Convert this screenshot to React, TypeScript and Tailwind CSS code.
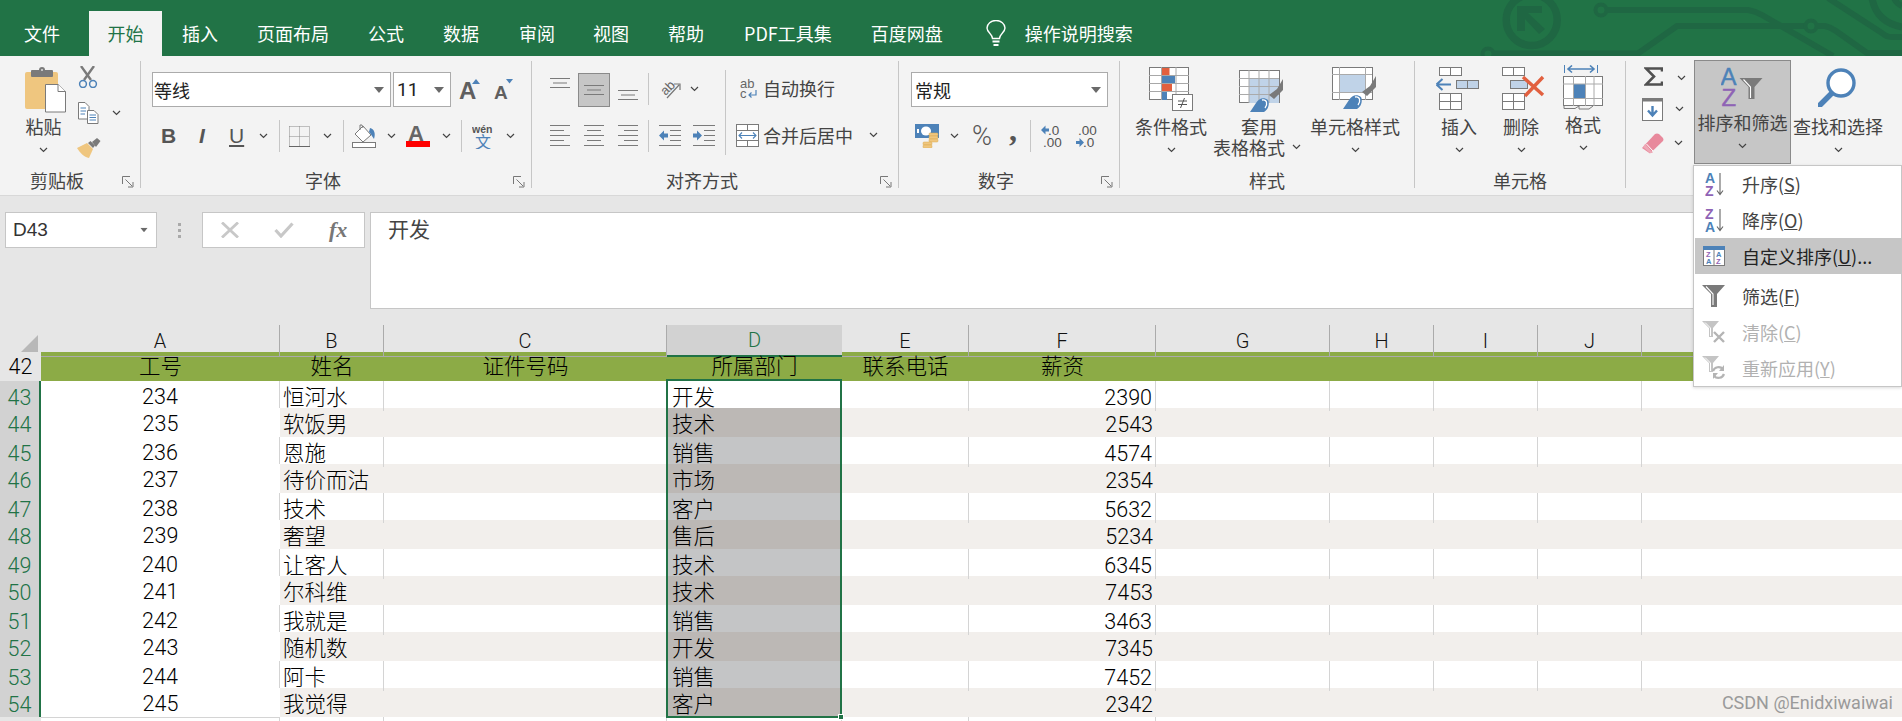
import React from "react";

const G = "#7a7a7a";
const BL = "#4d82b8";
const LB = "#c0d3e8";
const OR = "#e2603f";
const TAN = "#efc67f";
const PU = "#8f63b5";
const SANS = "Liberation Sans, Arial, sans-serif";

const Chev = ({ className = "" }: { className?: string }) => (
  <svg width="9" height="6" viewBox="0 0 9 6" className={`block shrink-0 ${className}`}>
    <path d="M1 1 L4.5 4.5 L8 1" fill="none" stroke="#444" strokeWidth="1.2" />
  </svg>
);
const Tri = ({ className = "" }: { className?: string }) => (
  <svg width="10" height="6" viewBox="0 0 10 6" className={`block shrink-0 ${className}`}>
    <path d="M0 0 H10 L5 6 Z" fill="#6a6a6a" />
  </svg>
);
const Launcher = () => (
  <svg width="12" height="12" viewBox="0 0 12 12" className="absolute right-[6px] bottom-[7px]">
    <path d="M0.5 8 V0.5 H8 M3.5 3.5 L10 10 M11 6 V11 H6" fill="none" stroke="#777" strokeWidth="1" />
  </svg>
);
const Sep = ({ className = "" }: { className?: string }) => <div className={`w-px shrink-0 bg-[#c6c6c6] ${className}`} />;
const GroupSep = () => <div className="mt-[5px] h-[127px] w-px shrink-0 bg-[#c6c6c6]" />;

const Group = ({ w, title, launcher, children }: { w: string; title: string; launcher?: boolean; children: React.ReactNode }) => (
  <section className={`relative flex shrink-0 flex-col ${w}`}>
    <div className="flex h-[110px] w-full">{children}</div>
    <div className={`flex h-[27px] items-center justify-center text-[18px] leading-[24px] text-[#444] ${launcher ? "pr-[26px]" : ""}`}>{title}</div>
    {launcher && <Launcher />}
  </section>
);

const Lines = ({ rows, w = 20, gap = 4.5 }: { rows: [number, number][]; w?: number; gap?: number }) => (
  <svg width={w} height={(rows.length - 1) * gap + 2} viewBox={`0 0 ${w} ${(rows.length - 1) * gap + 2}`} className="block shrink-0">
    {rows.map(([a, b], i) => (
      <rect key={i} x={a} y={i * gap} width={b - a} height="1" fill={G} />
    ))}
  </svg>
);

const TabBarArt = () => (
  <svg width="502" height="56" viewBox="0 0 502 56" className="absolute right-0 top-0" fill="none" stroke="#1f6743">
    <circle cx="131.7" cy="20" r="25.5" strokeWidth="7.5" />
    <path d="M117 6 H142 V13 H128 L145 29 L139 34 L125 19 V31 H117 Z" fill="#1f6743" stroke="none" />
    <circle cx="201" cy="10" r="5.5" strokeWidth="4" />
    <path d="M207 10 H348 Q355 11 362 15 L433 56" strokeWidth="6" />
    <circle cx="88" cy="54" r="5.5" strokeWidth="4" />
    <path d="M94 53.5 H238 L277 26 H405" strokeWidth="6" />
    <circle cx="411" cy="26" r="5.5" strokeWidth="4" />
    <path d="M417 26 H425 Q430 27 436 31 L467 53 H502" strokeWidth="6" />
    <path d="M428 -2 L482 33 Q486 37 492 37 H502" strokeWidth="6" />
    <path d="M472 -2 Q476 22 502 27" strokeWidth="7" />
    <path d="M494 -2 Q496 3 502 6" strokeWidth="6" />
  </svg>
);

const Bulb = () => (
  <svg width="20" height="27" viewBox="0 0 20 27" className="block" fill="none" stroke="#fff">
    <path d="M6.5 18.5 C6.5 14 1 12.5 1 8 A9 7.5 0 0 1 19 8 C19 12.5 13.5 14 13.5 18.5 Z" strokeWidth="1.4" />
    <path d="M6.5 21.5 H13.5 M7.5 25 H12.5" strokeWidth="2" />
  </svg>
);

const Paste = () => (
  <svg width="41" height="46" viewBox="0 0 41 46" className="block">
    <rect x="0" y="5" width="33" height="37" rx="2" fill={TAN} />
    <rect x="6" y="3" width="22" height="7" rx="1" fill={G} />
    <circle cx="17" cy="3" r="3" fill={G} />
    <circle cx="17" cy="3" r="1" fill="#ddd" />
    <path d="M20.5 17.5 H33 L40.5 24.5 V45 H20.5 Z" fill="#fff" stroke={G} />
    <path d="M33 17.5 V24.5 H40.5" fill="#fff" stroke={G} />
  </svg>
);
const Cut = () => (
  <svg width="20" height="22" viewBox="0 0 20 22" className="block" fill="none">
    <path d="M3 0 L13 14 M16 0 L6 14" stroke={G} strokeWidth="2.4" />
    <circle cx="5" cy="18" r="3.4" stroke={BL} strokeWidth="1.5" />
    <circle cx="15" cy="18" r="3.4" stroke={BL} strokeWidth="1.5" />
  </svg>
);
const Copy = () => (
  <svg width="21" height="22" viewBox="0 0 21 22" className="block">
    <path d="M0.5 0.5 H7 L11 4.5 V17 H0.5 Z" fill="#fff" stroke={G} />
    <path d="M9.5 8.5 H16 L20 12.5 V21.5 H9.5 Z" fill="#fff" stroke={G} />
    <path d="M2.5 6 H8 M2.5 9 H8 M2.5 12 H7 M11.5 13 H18 M11.5 15.5 H18 M11.5 18 H18" stroke={BL} strokeWidth="1" />
  </svg>
);
const Brush = () => (
  <svg width="24" height="21" viewBox="0 0 24 21" className="block">
    <path d="M0 10 L10 5 L16 11 L12 20 C7 19 3 15 0 10 Z" fill={TAN} />
    <path d="M11 4 L13.5 2 L18 6.5 L16 9 Z" fill={G} transform="translate(0 1)" />
    <path d="M15 4 L20 0 L23.5 3 L19 9 Z" fill={G} />
  </svg>
);
const Grow = () => (
  <svg width="22" height="21" viewBox="0 0 22 21" className="block">
    <text x="0" y="20" fontFamily={SANS} fontSize="24" fontWeight="700" fill="#5f5f5f">A</text>
    <path d="M13 5 L17 0 L21 5 Z" fill={BL} />
  </svg>
);
const Shrink = () => (
  <svg width="20" height="21" viewBox="0 0 20 21" className="block">
    <text x="0" y="20" fontFamily={SANS} fontSize="19" fontWeight="700" fill="#5f5f5f">A</text>
    <path d="M12 0 H19 L15.5 4.5 Z" fill={BL} />
  </svg>
);
const Borders = () => (
  <svg width="21" height="21" viewBox="0 0 21 21" className="block" fill="none">
    <path d="M0.5 0.5 H20.5 V20.5 M0.5 0.5 V20.5 M10.5 0.5 V20.5 M0.5 10.5 H20.5" stroke="#888" strokeDasharray="1 1" />
    <path d="M0 20.5 H21" stroke="#666" />
  </svg>
);
const Fill = () => (
  <svg width="25" height="24" viewBox="0 0 25 24" className="block">
    <path d="M3 10 L11 2 L19 11 L11 18 Z" fill="#fff" stroke={G} />
    <path d="M8 6 V1 H10 L11 4" fill="none" stroke={G} />
    <path d="M18 4 C22 5 24 9 22 15 C20 12 19 10 17 8 Z" fill={BL} />
    <rect x="0.5" y="18.5" width="23" height="5" fill="#fff" stroke={G} />
  </svg>
);
const FontColor = () => (
  <svg width="24" height="22" viewBox="0 0 24 22" className="block">
    <text x="2" y="16" fontFamily={SANS} fontSize="22" fontWeight="700" fill="#666">A</text>
    <rect x="0" y="16" width="24" height="6" fill="#fe0000" />
  </svg>
);
const Wen = () => (
  <svg width="22" height="25" viewBox="0 0 22 25" className="block">
    <text x="0" y="9" fontFamily={SANS} fontSize="10.5" fontWeight="700" fill="#555">wén</text>
    <text x="3" y="24" fontFamily="Noto Sans CJK SC, sans-serif" fontSize="16" fill={BL}>文</text>
  </svg>
);
const Orient = () => (
  <svg width="21" height="20" viewBox="0 0 21 20" className="block">
    <text x="0" y="14" transform="rotate(-45 6 10)" fontFamily={SANS} fontSize="13" fill="#666">ab</text>
    <path d="M6 19 L18 6 M13 5 H19 V11" fill="none" stroke="#777" strokeWidth="1.2" />
  </svg>
);
const IndentL = () => (
  <svg width="22" height="22" viewBox="0 0 22 22" className="block">
    <path d="M0 0.5 H22 M11 5.5 H22 M11 10.5 H22 M11 15.5 H22 M0 20.5 H22" stroke={G} />
    <path d="M0 10.5 L5 5.5 V8.5 H9 V12.5 H5 V15.5 Z" fill={BL} />
  </svg>
);
const IndentR = () => (
  <svg width="22" height="22" viewBox="0 0 22 22" className="block">
    <path d="M0 0.5 H22 M11 5.5 H22 M11 10.5 H22 M11 15.5 H22 M0 20.5 H22" stroke={G} />
    <path d="M9 10.5 L4 5.5 V8.5 H0 V12.5 H4 V15.5 Z" fill={BL} />
  </svg>
);
const Wrap = () => (
  <svg width="18" height="21" viewBox="0 0 18 21" className="block">
    <text x="0" y="10" fontFamily={SANS} fontSize="13" fill="#666">ab</text>
    <text x="0" y="20" fontFamily={SANS} fontSize="13" fill="#666">c</text>
    <path d="M16 12 V17 H9 M11.5 14.5 L9 17 L11.5 19.5" fill="none" stroke={BL} strokeWidth="1.2" />
  </svg>
);
const Merge = () => (
  <svg width="23" height="23" viewBox="0 0 23 23" className="block" fill="none">
    <rect x="0.5" y="0.5" width="22" height="22" fill="#fff" stroke={G} />
    <path d="M0 6.5 H23 M0 16.5 H23 M11.5 0 V6.5 M11.5 16.5 V23" stroke={G} />
    <path d="M3 11.5 H20 M6 8.5 L3 11.5 L6 14.5 M17 8.5 L20 11.5 L17 14.5" stroke={BL} strokeWidth="1.1" />
  </svg>
);
const Money = () => (
  <svg width="25" height="24" viewBox="0 0 25 24" className="block">
    <rect x="0" y="0" width="24" height="14" fill={BL} />
    <ellipse cx="11" cy="7" rx="5" ry="4.5" fill="#fff" />
    <rect x="2" y="5" width="2" height="4" fill="#fff" />
    <g fill={TAN} stroke="#d9a84f" strokeWidth="0.5">
      <rect x="14" y="9" width="9" height="3" rx="1" />
      <rect x="14" y="12" width="9" height="3" rx="1" />
      <rect x="14" y="15" width="9" height="3" rx="1" />
      <rect x="8" y="18" width="9" height="3" rx="1" />
      <rect x="8" y="21" width="9" height="3" rx="1" />
    </g>
  </svg>
);
const Dec = ({ up }: { up?: boolean }) => (
  <svg width="23" height="24" viewBox="0 0 23 24" className="block">
    <text x={up ? 7 : 2} y="10.5" fontFamily={SANS} fontSize="13.5" fill="#555">{up ? ".0" : ".00"}</text>
    <text x={up ? 2 : 7} y="23" fontFamily={SANS} fontSize="13.5" fill="#555">{up ? ".00" : ".0"}</text>
    {up ? (
      <path d="M0 6 L4.5 1.5 V4.5 H8 V7.5 H4.5 V10.5 Z" fill={BL} />
    ) : (
      <path d="M8 18.5 L3.5 14 V17 H0 V20 H3.5 V23 Z" fill={BL} />
    )}
  </svg>
);
const CondFmt = () => (
  <svg width="45" height="45" viewBox="0 0 45 45" className="block">
    <rect x="0.5" y="0.5" width="39" height="32" fill="#fff" stroke={G} />
    <rect x="12.5" y="1" width="8" height="8" fill={OR} />
    <rect x="12.5" y="9" width="13.5" height="8" fill={BL} />
    <rect x="12.5" y="17" width="10.5" height="8" fill={OR} />
    <rect x="12.5" y="25" width="5.5" height="8" fill={BL} />
    <path d="M12.5 0 V33 M27 0 V33 M0 8.5 H40 M0 16.5 H40 M0 24.5 H40" stroke="#a8a8a8" />
    <rect x="23.5" y="27.5" width="20" height="16" fill="#fff" stroke={G} />
    <path d="M29 34 H38 M29 37.5 H38 M35.5 31 L31.5 41" stroke="#555" fill="none" />
  </svg>
);
const TableFmt = () => (
  <svg width="46" height="43" viewBox="0 0 46 43" className="block">
    <rect x="0.5" y="0.5" width="40" height="32" fill="#fff" stroke={G} />
    <rect x="10" y="8" width="30" height="25" fill={LB} />
    <path d="M10 0 V33 M20 0 V33 M30 0 V33 M0 8.5 H40 M0 16.5 H40 M0 24.5 H40" stroke="#aaa" />
    <path d="M38 19 L44 9 V20 L35 29 L30 25 Z" fill={G} />
    <path d="M11 42 L17 33 C20 28 25 27 29 30 C31 34 29 40 25 42 Z" fill={BL} />
    <path d="M23 30 C28 29 29 34 26 38" fill="none" stroke="#fff" strokeWidth="1.3" />
  </svg>
);
const CellStyle = () => (
  <svg width="46" height="43" viewBox="0 0 46 43" className="block">
    <rect x="0.5" y="0.5" width="40" height="32" fill="#fff" stroke={G} />
    <rect x="8" y="8" width="26" height="18" fill={LB} />
    <path d="M7.5 0 V33 M33.5 0 V33 M0 7.5 H40 M0 25.5 H40" stroke="#aaa" />
    <path d="M38 19 L44 9 V20 L35 29 L30 25 Z" fill={G} />
    <path d="M11 42 L17 33 C20 28 25 27 29 30 C31 34 29 40 25 42 Z" fill={BL} />
    <path d="M23 30 C28 29 29 34 26 38" fill="none" stroke="#fff" strokeWidth="1.3" />
  </svg>
);
const InsertI = () => (
  <svg width="46" height="44" viewBox="0 0 46 44" className="block">
    <rect x="3.5" y="0.5" width="22" height="8" fill="#fff" stroke={G} />
    <path d="M14.5 0 V9" stroke={G} />
    <rect x="20.5" y="13.5" width="22" height="8" fill={LB} stroke={G} />
    <path d="M31.5 13 V22" stroke={G} />
    <path d="M0.5 17.5 L6.5 12 M0.5 17.5 L6.5 23 M1 17.5 H15" fill="none" stroke={BL} strokeWidth="2" />
    <rect x="3.5" y="26.5" width="22" height="16" fill="#fff" stroke={G} />
    <path d="M14.5 26 V43 M3 34.5 H26" stroke={G} />
  </svg>
);
const DeleteI = () => (
  <svg width="46" height="44" viewBox="0 0 46 44" className="block">
    <rect x="1.5" y="0.5" width="22" height="8" fill="#fff" stroke={G} />
    <path d="M12.5 0 V9" stroke={G} />
    <rect x="9.5" y="13.5" width="17" height="8" fill={LB} stroke={G} />
    <rect x="1.5" y="26.5" width="22" height="16" fill="#fff" stroke={G} />
    <path d="M12.5 26 V43 M1 34.5 H24" stroke={G} />
    <path d="M22 10 L42 28 M42 10 L24 29" fill="none" stroke={OR} strokeWidth="3.4" />
  </svg>
);
const FormatI = () => (
  <svg width="42" height="45" viewBox="0 0 42 45" className="block">
    <path d="M2.5 0 V8 M35.5 0 V8" stroke={BL} />
    <path d="M6 4 H32 M10 0.5 L6 4 L10 7.5 M28 0.5 L32 4 L28 7.5" fill="none" stroke={BL} strokeWidth="1.6" />
    <rect x="1.5" y="11.5" width="39" height="29" fill="#fff" stroke={G} />
    <rect x="12" y="19" width="11" height="14" fill={BL} />
    <path d="M11.5 11 V41 M23.5 11 V41 M32 11 V41 M1 19 H41 M1 33.5 H41" stroke="#aaa" />
    <path d="M2 41 V43.5 H13 L17 41 M17 41 V44 H27 L31 41" fill="none" stroke={G} />
  </svg>
);
const Sigma = () => (
  <svg width="19" height="19" viewBox="0 0 19 19" className="block">
    <path d="M18 4.5 V1.5 H2 L10 9.5 L2 17.5 H18 V14.5" fill="none" stroke="#505050" strokeWidth="2.6" />
  </svg>
);
const FillI = () => (
  <svg width="21" height="23" viewBox="0 0 21 23" className="block">
    <rect x="0.5" y="0.5" width="20" height="22" fill="#fff" stroke={G} />
    <rect x="0" y="0" width="21" height="3.5" fill={G} />
    <path d="M10.5 8 V17 M6 12.5 L10.5 17.5 L15 12.5" fill="none" stroke={BL} strokeWidth="2.4" />
  </svg>
);
const Eraser = () => (
  <svg width="23" height="21" viewBox="0 0 23 21" className="block">
    <path d="M0 15 L13 1 Q15 0 17 1 L21 5 Q22 7 21 8 L8 20.5 Z" fill="#e8899c" />
    <path d="M3 11 L11 20 H8 L1 14 Z" fill="#eea9b6" />
    <path d="M4.5 11 L11 18" stroke="#fff" strokeWidth="1" />
  </svg>
);
const Funnel = ({ fill = G, w = 23, h = 22 }: { fill?: string; w?: number; h?: number }) => (
  <svg width={w} height={h} viewBox="0 0 23 22" className="block">
    <path d="M0 0 H23 L15 9 V22 H9 V9 Z" fill={fill} />
    <path d="M4 1.5 L11 9 V20" fill="none" stroke="#fff" strokeWidth="1.1" />
  </svg>
);
const SortBig = () => (
  <svg width="44" height="40" viewBox="0 0 44 40" className="block">
    <text x="-0.5" y="18" fontFamily={SANS} fontSize="24" fontWeight="400" fill={BL} stroke={BL} strokeWidth="0.4">A</text>
    <text x="0.5" y="39" fontFamily={SANS} fontSize="24" fontWeight="400" fill={PU} stroke={PU} strokeWidth="0.4">Z</text>
    <g transform="translate(18.5 11)"><path d="M0 0 H23 L15 9 V21 H9 V9 Z" fill={G} /><path d="M4 1.5 L11 9 V20" fill="none" stroke="#fff" strokeWidth="1.1" /></g>
  </svg>
);
const Magnifier = () => (
  <svg width="40" height="40" viewBox="0 0 40 40" className="block">
    <circle cx="23" cy="16" r="13" fill="#fff" stroke={BL} strokeWidth="3.4" />
    <path d="M13 27 L2 38" stroke={BL} strokeWidth="5.5" strokeLinecap="round" />
  </svg>
);

const MIconSort = ({ desc }: { desc?: boolean }) => (
  <svg width="20" height="24" viewBox="0 0 20 24" className="block">
    <text x="0" y="11" fontFamily={SANS} fontSize="14" fontWeight="700" fill={desc ? PU : BL}>{desc ? "Z" : "A"}</text>
    <text x="0" y="23.5" fontFamily={SANS} fontSize="14" fontWeight="700" fill={desc ? BL : PU}>{desc ? "A" : "Z"}</text>
    <path d="M15 1 V22 M12 18.5 L15 22.5 L18 18.5" fill="none" stroke="#666" strokeWidth="1.1" />
  </svg>
);
const MIconCustom = () => (
  <svg width="22" height="20" viewBox="0 0 22 20" className="block">
    <rect x="0.5" y="0.5" width="21" height="19" fill="#fff" stroke={G} />
    <rect x="0" y="0" width="22" height="4" fill={BL} />
    <path d="M11 4 V20" stroke={G} />
    <text x="3" y="11" fontFamily={SANS} fontSize="7.5" fontWeight="700" fill={PU}>Z</text>
    <text x="3" y="18" fontFamily={SANS} fontSize="7.5" fontWeight="700" fill={BL}>A</text>
    <text x="13" y="11" fontFamily={SANS} fontSize="7.5" fontWeight="700" fill={BL}>A</text>
    <text x="13" y="18" fontFamily={SANS} fontSize="7.5" fontWeight="700" fill={PU}>Z</text>
  </svg>
);
const MIconClear = () => (
  <svg width="23" height="23" viewBox="0 0 23 23" className="block">
    <path d="M0 0 H17 L11 7 V16 H7 V7 Z" fill="#c4c4c4" />
    <path d="M3 1.5 L8.5 7 V15" fill="none" stroke="#fff" />
    <path d="M12 11 L22 21 M22 11 L12 21" stroke="#b4b4b4" strokeWidth="2.4" />
  </svg>
);
const MIconReapply = () => (
  <svg width="24" height="24" viewBox="0 0 24 24" className="block">
    <path d="M0 0 H17 L11 7 V16 H7 V7 Z" fill="#c4c4c4" />
    <path d="M3 1.5 L8.5 7 V15" fill="none" stroke="#fff" />
    <path d="M11 15 A6 6 0 0 1 21 13 M22 18 A6 6 0 0 1 12 20" fill="none" stroke="#b4b4b4" strokeWidth="2.2" />
    <path d="M22 9 V15 H17 Z M11 23 V17 H16 Z" fill="#b4b4b4" />
  </svg>
);

const L = ({ children, className = "" }: { children: React.ReactNode; className?: string }) => (
  <span className={`whitespace-nowrap text-[18px] leading-[24px] text-[#444] ${className}`}>{children}</span>
);

const VBtn = ({ w, icon, label, className = "" }: { w: string; icon: React.ReactNode; label: string; className?: string }) => (
  <div className={`flex shrink-0 flex-col items-center pt-[11px] ${w} ${className}`}>
    <div className="flex h-[47px] items-start justify-center">{icon}</div>
    <L>{label}</L>
    <div className="flex h-[23px] items-center"><Chev /></div>
  </div>
);

const colsClass = "grid grid-cols-[41px_239px_104px_283px_175px_127px_187px_174px_104px_104px_104px_1fr]";
const cellFont = "font-['Roboto','Noto_Sans_CJK_SC',sans-serif] font-light text-[21.5px] leading-[26px] text-black";

const data: [number, number, string, string, number][] = [
  [43, 234, "恒河水", "开发", 2390],
  [44, 235, "软饭男", "技术", 2543],
  [45, 236, "恩施", "销售", 4574],
  [46, 237, "待价而沽", "市场", 2354],
  [47, 238, "技术", "客户", 5632],
  [48, 239, "奢望", "售后", 5234],
  [49, 240, "让客人", "技术", 6345],
  [50, 241, "尔科维", "技术", 7453],
  [51, 242, "我就是", "销售", 3463],
  [52, 243, "随机数", "开发", 7345],
  [53, 244, "阿卡", "销售", 7452],
  [54, 245, "我觉得", "客户", 2342],
];

const HeadCell = ({ label, active }: { label: string; active?: boolean }) => (
  <div
    className={`flex items-center justify-center font-['Roboto',sans-serif] text-[20px] font-light ${
      active ? "border-b-2 border-b-[#217346] bg-[#d2d2d2] text-[#217346]" : "border-r border-b border-[#ababab] text-[#111]"
    }`}
  >
    {label}
  </div>
);

const DataRow = ({ r }: { r: (typeof data)[number] }) => {
  const [n, id, name, dept, pay] = r;
  const band = n % 2 === 0;
  const line = band ? "" : "border-r border-[#d4d4d4]";
  return (
    <div className={`${colsClass} ${band ? "h-[29px] bg-[#f2efec]" : "h-[27px] bg-white"} ${cellFont}`}>
      <div className="flex items-center justify-center border-r-2 border-r-[#217346] bg-[#d2d2d2] pt-[3px] text-[#217346]">{n}</div>
      <div className={`flex items-center justify-center border-b border-b-[#d4d4d4] bg-white pt-[3px] ${line}`}>{id}</div>
      <div className={`flex items-center pl-[3px] pt-[3px] ${line}`}>{name}</div>
      <div className={line} />
      <div className={`flex items-center pl-[5px] pt-[3px] ${n === 43 ? "bg-white" : band ? "bg-[#bcb8b5]" : "bg-[#c4c5c6]"}`}>{dept}</div>
      <div className={line} />
      <div className={`flex items-center justify-end pr-[3px] pt-[3px] ${line}`}>{pay}</div>
      <div className={line} />
      <div className={line} />
      <div className={line} />
      <div className={line} />
      <div />
    </div>
  );
};

export default function App() {
  const menuItem = "flex h-[36px] items-center text-[18px] leading-[24px]";
  const tab = "flex h-[45px] items-center";
  return (
    <div className="relative h-[721px] w-[1902px] overflow-hidden bg-white font-['Noto_Sans_CJK_SC',sans-serif]">
      {/* Tabs */}
      <header className="relative h-[56px] overflow-hidden bg-[#217346] text-[18px] text-white">
        <TabBarArt />
        <nav className="relative flex h-full items-end">
          <span className={`ml-[24px] ${tab}`}>文件</span>
          <span className="ml-[29px] flex h-[45px] w-[73px] items-center justify-center bg-[#f3f3f3] text-[#217346]">开始</span>
          <span className={`ml-[20px] ${tab}`}>插入</span>
          <span className={`ml-[39px] ${tab}`}>页面布局</span>
          <span className={`ml-[39px] ${tab}`}>公式</span>
          <span className={`ml-[39px] ${tab}`}>数据</span>
          <span className={`ml-[40px] ${tab}`}>审阅</span>
          <span className={`ml-[38px] ${tab}`}>视图</span>
          <span className={`ml-[39px] ${tab}`}>帮助</span>
          <span className={`ml-[40px] ${tab}`}>PDF工具集</span>
          <span className={`ml-[39px] ${tab}`}>百度网盘</span>
          <span className={`ml-[43px] ${tab}`}><Bulb /></span>
          <span className={`ml-[19px] ${tab}`}>操作说明搜索</span>
        </nav>
      </header>

      {/* Ribbon */}
      <div className="flex h-[139px] bg-[#f3f3f3]">
        <Group w="w-[140px]" title="剪贴板" launcher>
          <div className="ml-[22px] flex w-[43px] flex-col items-center pt-[11px]">
            <div className="flex h-[47px] items-start pl-[4px]"><Paste /></div>
            <L>粘贴</L>
            <div className="flex h-[23px] items-center"><Chev /></div>
          </div>
          <div className="ml-[12px] flex flex-col pt-[10px]">
            <div className="ml-[1px]"><Cut /></div>
            <div className="ml-[1px] mt-[14px] flex items-center"><Copy /><Chev className="ml-[13px]" /></div>
            <div className="mt-[14px]"><Brush /></div>
          </div>
        </Group>
        <GroupSep />
        <Group w="w-[390px]" title="字体" launcher>
          <div className="flex flex-col pt-[16px]">
            <div className="flex h-[35px] items-center">
              <div className="ml-[11px] flex h-[35px] w-[239px] items-center justify-between border border-[#ababab] bg-white pl-[1px] pr-[6px]"><span className="text-[18px] leading-[24px] text-[#222]">等线</span><Tri /></div>
              <div className="ml-[2px] flex h-[35px] w-[58px] items-center justify-between border border-[#ababab] bg-white pl-[3px] pr-[6px]"><span className="font-['Roboto',sans-serif] text-[19px] leading-[24px] text-[#222]">11</span><Tri /></div>
              <div className="ml-[8px]"><Grow /></div>
              <div className="ml-[13px]"><Shrink /></div>
            </div>
            <div className="mt-[13px] flex h-[32px] items-center">
              <span className="ml-[20px] w-[14px] text-center text-[21px] font-bold leading-[24px] text-[#555] font-['Liberation_Sans',sans-serif]">B</span>
              <span className="ml-[21px] w-[12px] text-center text-[21px] font-bold italic leading-[24px] text-[#555] font-['Liberation_Sans',sans-serif]">I</span>
              <span className="ml-[21px] w-[14px] text-center text-[21px] leading-[24px] text-[#555] underline font-['Liberation_Sans',sans-serif]">U</span>
              <Chev className="ml-[16px]" />
              <Sep className="ml-[11px] h-[32px]" />
              <div className="ml-[9px]"><Borders /></div>
              <Chev className="ml-[13px]" />
              <Sep className="ml-[11px] h-[32px]" />
              <div className="ml-[8px]"><Fill /></div>
              <Chev className="ml-[10px]" />
              <div className="ml-[10px]"><FontColor /></div>
              <Chev className="ml-[12px]" />
              <Sep className="ml-[10px] h-[32px]" />
              <div className="ml-[10px]"><Wen /></div>
              <Chev className="ml-[12px]" />
            </div>
          </div>
        </Group>
        <GroupSep />
        <Group w="w-[366px]" title="对齐方式" launcher>
          <div className="flex w-[193px] shrink-0 flex-col pt-[17px]">
            <div className="flex h-[34px]">
              <div className="ml-[18px] mt-[5px]"><Lines rows={[[0, 20], [3, 17], [0, 20]]} /></div>
              <div className="ml-[8px] flex h-[34px] w-[32px] items-center justify-center border border-[#8a8a8a] bg-[#c6c6c6]"><Lines rows={[[0, 20], [3, 17], [0, 20]]} /></div>
              <div className="ml-[8px] mt-[17px]"><Lines rows={[[0, 20], [3, 17], [0, 20]]} /></div>
              <Sep className="ml-[10px] h-[32px]" />
              <div className="ml-[12px] mt-[6px]"><Orient /></div>
              <Chev className="ml-[8px] mt-[13px]" />
            </div>
            <div className="mt-[13px] flex h-[32px] items-center">
              <div className="ml-[18px]"><Lines rows={[[0, 20], [0, 14], [0, 20], [0, 14], [0, 20]]} gap={5} /></div>
              <div className="ml-[14px]"><Lines rows={[[0, 20], [3, 17], [0, 20], [3, 17], [0, 20]]} gap={5} /></div>
              <div className="ml-[14px]"><Lines rows={[[0, 20], [6, 20], [0, 20], [6, 20], [0, 20]]} gap={5} /></div>
              <Sep className="ml-[10px] h-[32px]" />
              <div className="ml-[10px]"><IndentL /></div>
              <div className="ml-[12px]"><IndentR /></div>
            </div>
          </div>
          <Sep className="mt-[14px] h-[85px]" />
          <div className="flex flex-col pt-[17px]">
            <div className="flex h-[30px] items-center">
              <div className="ml-[14px]"><Wrap /></div>
              <L className="ml-[5px]">自动换行</L>
            </div>
            <div className="mt-[16px] flex h-[32px] items-center">
              <div className="ml-[10px]"><Merge /></div>
              <L className="ml-[4px]">合并后居中</L>
              <Chev className="ml-[16px]" />
            </div>
          </div>
        </Group>
        <GroupSep />
        <Group w="w-[220px]" title="数字" launcher>
          <div className="flex flex-col pt-[16px]">
            <div className="ml-[12px] flex h-[35px] w-[197px] items-center justify-between border border-[#ababab] bg-white pl-[3px] pr-[6px]"><span className="text-[18px] leading-[24px] text-[#222]">常规</span><Tri /></div>
            <div className="mt-[13px] flex h-[32px] items-center">
              <div className="ml-[16px]"><Money /></div>
              <Chev className="ml-[10px]" />
              <span className="ml-[13px] font-['Roboto',sans-serif] text-[27px] font-light leading-[30px] text-[#555]">%</span>
              <span className="ml-[17px] mb-[12px] font-['Liberation_Serif',serif] text-[32px] font-bold leading-[24px] text-[#555]">,</span>
              <Sep className="ml-[13px] h-[32px]" />
              <div className="ml-[10px]"><Dec up /></div>
              <div className="ml-[12px]"><Dec /></div>
            </div>
          </div>
        </Group>
        <GroupSep />
        <Group w="w-[294px]" title="样式">
          <VBtn w="w-[72px]" className="ml-[15px]" icon={<CondFmt />} label="条件格式" />
          <div className="ml-[6px] flex w-[86px] shrink-0 flex-col items-start pt-[14px]">
            <div className="ml-[26px] flex h-[44px] items-start"><TableFmt /></div>
            <L className="ml-[28px]">套用</L>
            <div className="-mt-[3px] flex h-[23px] items-center"><L>表格格式</L><Chev className="ml-[7px]" /></div>
          </div>
          <VBtn w="w-[90px]" className="ml-[11px]" icon={<CellStyle />} label="单元格样式" />
        </Group>
        <GroupSep />
        <Group w="w-[210px]" title="单元格">
          <VBtn w="w-[46px]" className="ml-[21px]" icon={<InsertI />} label="插入" />
          <VBtn w="w-[46px]" className="ml-[16px]" icon={<div className="ml-[5px]"><DeleteI /></div>} label="删除" />
          <VBtn w="w-[46px]" className="ml-[16px] !pt-[9px]" icon={<div className="mb-[2px]"><FormatI /></div>} label="格式" />
        </Group>
        <GroupSep />
        <Group w="w-[272px]" title="">
          <div className="ml-[16px] flex w-[52px] shrink-0 flex-col pt-[10px]">
            <div className="flex h-[20px] items-center"><div className="ml-[2px]"><Sigma /></div><Chev className="ml-[14px] mt-[4px]" /></div>
            <div className="mt-[11px] flex h-[24px] items-center"><FillI /><Chev className="ml-[12px]" /></div>
            <div className="mt-[11px] flex h-[22px] items-center"><Eraser /><Chev className="ml-[9px]" /></div>
          </div>
          <div className="mt-[4px] flex h-[104px] w-[97px] shrink-0 flex-col items-center border border-[#8a8a8a] bg-[#c6c6c6] pt-[6px]">
            <div className="flex h-[43px] items-start"><SortBig /></div>
            <L>排序和筛选</L>
            <div className="flex h-[23px] items-center"><Chev /></div>
          </div>
          <div className="ml-[2px] flex w-[90px] shrink-0 flex-col items-center pt-[11px]">
            <div className="flex h-[47px] items-start"><Magnifier /></div>
            <L>查找和选择</L>
            <div className="flex h-[23px] items-center"><Chev /></div>
          </div>
        </Group>
      </div>

      {/* Formula bar */}
      <div className="flex h-[130px] border-t border-[#d8d8d8] bg-[#e6e6e6] pt-[16px]">
        <div className="ml-[5px] flex h-[36px] w-[152px] items-center justify-between border border-[#c6c6c6] bg-white pl-[7px] pr-[7px]">
          <span className="font-['Liberation_Sans',sans-serif] text-[19px] text-[#333]">D43</span>
          <Tri className="scale-75" />
        </div>
        <div className="ml-[20px] flex h-[36px] w-[4px] flex-col items-center justify-center gap-[3px]">
          <i className="block h-[3px] w-[3px] bg-[#aaa]" /><i className="block h-[3px] w-[3px] bg-[#aaa]" /><i className="block h-[3px] w-[3px] bg-[#aaa]" />
        </div>
        <div className="ml-[21px] flex h-[36px] w-[163px] items-center border border-[#c6c6c6] bg-white">
          <svg width="20" height="16" viewBox="0 0 20 16" className="ml-[17px] block"><path d="M2 0.5 L18 15.5 M18 0.5 L2 15.5" stroke="#c8c8c8" strokeWidth="2.8" /></svg>
          <svg width="20" height="16" viewBox="0 0 20 16" className="ml-[34px] block"><path d="M1.5 8 L7 14 L18.5 1.5" fill="none" stroke="#c8c8c8" strokeWidth="3.2" /></svg>
          <span className="ml-[35px] font-['Liberation_Serif',serif] text-[22px] font-bold italic leading-none text-[#777]">fx</span>
        </div>
        <div className="ml-[5px] h-[97px] flex-1 border border-[#c6c6c6] bg-white pl-[17px] pt-[1px] text-[21px] leading-[28px] text-[#444]">开发</div>
      </div>

      {/* Column headers */}
      <div className={`${colsClass} h-[27px] bg-[#e6e6e6]`}>
        <div className="flex items-end justify-end border-b border-[#ababab] pb-[2px] pr-[3px]">
          <svg width="19" height="19" viewBox="0 0 19 19" className="block"><path d="M19 0 V19 H0 Z" fill="#b8b8b8" /></svg>
        </div>
        <HeadCell label="A" />
        <HeadCell label="B" />
        <HeadCell label="C" />
        <HeadCell label="D" active />
        <HeadCell label="E" />
        <HeadCell label="F" />
        <HeadCell label="G" />
        <HeadCell label="H" />
        <HeadCell label="I" />
        <HeadCell label="J" />
        <HeadCell label="" />
      </div>

      {/* Row 42 */}
      <div className={`${colsClass} h-[29px] bg-[#8cab46] ${cellFont}`}>
        <div className="flex items-center justify-center bg-[#e6e6e6] pt-[1px]">42</div>
        <div className="flex items-center justify-center pt-[1px]">工号</div>
        <div className="flex items-center justify-center pt-[1px]">姓名</div>
        <div className="flex items-center justify-center pt-[1px]">证件号码</div>
        <div className="flex items-center justify-center pt-[1px]">所属部门</div>
        <div className="flex items-center justify-center pt-[1px]">联系电话</div>
        <div className="flex items-center justify-center pt-[1px]">薪资</div>
      </div>

      {data.map((r) => (
        <DataRow key={r[0]} r={r} />
      ))}
      <div className={`${colsClass} h-[4px] bg-white`}>
        <div className="bg-[#e6e6e6]" />
        <div className="border-r border-[#d4d4d4]" />
        <div className="border-r border-[#d4d4d4]" />
        <div className="border-r border-[#d4d4d4]" />
        <div className="border-r border-[#d4d4d4]" />
        <div className="border-r border-[#d4d4d4]" />
        <div className="border-r border-[#d4d4d4]" />
      </div>

      {/* Selection */}
      <div className="pointer-events-none absolute left-[666px] top-[379px] h-[339px] w-[176px] border-2 border-[#217346]">
        <div className="absolute -bottom-[4px] -right-[4px] h-[6px] w-[6px] border border-white bg-[#217346]" />
      </div>

      {/* Dropdown menu */}
      <div className="absolute left-[1693px] top-[165px] h-[222px] w-[209px] border border-[#c6c6c6] bg-white shadow-[0_1px_3px_rgba(0,0,0,0.15)]">
        <div className={`${menuItem} text-[#444]`}><div className="w-[48px] pl-[11px]"><MIconSort /></div>升序(<u>S</u>)</div>
        <div className={`${menuItem} text-[#444]`}><div className="w-[48px] pl-[11px]"><MIconSort desc /></div>降序(<u>O</u>)</div>
        <div className={`${menuItem} ml-px bg-[#c6c6c6] text-[#222]`}><div className="w-[47px] pl-[8px]"><MIconCustom /></div>自定义排序(<u>U</u>)...</div>
        <div className={`${menuItem} mt-[4px] text-[#444]`}><div className="w-[48px] pl-[8px]"><Funnel /></div>筛选(<u>F</u>)</div>
        <div className={`${menuItem} text-[#b1b1b1]`}><div className="w-[48px] pl-[8px]"><MIconClear /></div>清除(<u>C</u>)</div>
        <div className={`${menuItem} text-[#b1b1b1]`}><div className="w-[48px] pl-[8px]"><MIconReapply /></div>重新应用(<u>Y</u>)</div>
      </div>

      {/* Watermark */}
      <div className="absolute right-[9px] top-[693px] font-['Roboto',sans-serif] text-[18px] leading-[20px] text-[#9a9a9a]">CSDN @Enidxiwaiwai</div>
    </div>
  );
}
